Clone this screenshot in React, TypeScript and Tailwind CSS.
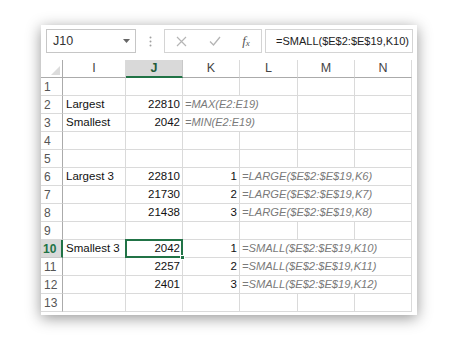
import { Fragment } from 'react'

/* Excel-style sheet snippet: formula bar + small grid I..N, rows 1..13.
   J10 is the active cell, so column J and row 10 headers are highlighted. */

const COLS = ['I', 'J', 'K', 'L', 'M', 'N']

type Row = {
  n: number
  label?: string
  value?: string
  k?: string
  // formula text and where it starts (K spans 2, L spans 3)
  formula?: string
  formulaAt?: 'K' | 'L'
}

const ROWS: Row[] = [
  { n: 1 },
  { n: 2, label: 'Largest', value: '22810', formula: '=MAX(E2:E19)', formulaAt: 'K' },
  { n: 3, label: 'Smallest', value: '2042', formula: '=MIN(E2:E19)', formulaAt: 'K' },
  { n: 4 },
  { n: 5 },
  { n: 6, label: 'Largest 3', value: '22810', k: '1', formula: '=LARGE($E$2:$E$19,K6)', formulaAt: 'L' },
  { n: 7, value: '21730', k: '2', formula: '=LARGE($E$2:$E$19,K7)', formulaAt: 'L' },
  { n: 8, value: '21438', k: '3', formula: '=LARGE($E$2:$E$19,K8)', formulaAt: 'L' },
  { n: 9 },
  { n: 10, label: 'Smallest 3', value: '2042', k: '1', formula: '=SMALL($E$2:$E$19,K10)', formulaAt: 'L' },
  { n: 11, value: '2257', k: '2', formula: '=SMALL($E$2:$E$19,K11)', formulaAt: 'L' },
  { n: 12, value: '2401', k: '3', formula: '=SMALL($E$2:$E$19,K12)', formulaAt: 'L' },
  { n: 13 },
]

const cell = 'h-[18px] border-r border-b border-[#dadada] flex items-center overflow-visible whitespace-nowrap'

function FormulaBar() {
  return (
    <div className="flex items-center h-[24px] pl-[5px] pr-[4px] gap-0">
      <div className="w-[90px] h-[24px] border border-[#c6c6c6] bg-white flex items-center justify-between pl-[6px] pr-[5px] text-[12.5px] text-[#333]">
        <span>J10</span>
        <svg width="7" height="4" viewBox="0 0 7 4"><path d="M0 0h7L3.5 4z" fill="#666" /></svg>
      </div>
      <div className="w-[28px] flex justify-center">
        <svg width="3" height="11" viewBox="0 0 3 11">
          <circle cx="1.5" cy="1.5" r="1" fill="#a0a0a0" />
          <circle cx="1.5" cy="5.5" r="1" fill="#a0a0a0" />
          <circle cx="1.5" cy="9.5" r="1" fill="#a0a0a0" />
        </svg>
      </div>
      <div className="w-[98px] h-[24px] border border-[#d4d4d4] bg-white flex items-center">
        <div className="w-[33px] flex justify-center">
          <svg width="11" height="11" viewBox="0 0 11 11"><path d="M1 1l9 9M10 1l-9 9" stroke="#b5b5b5" strokeWidth="1.2" /></svg>
        </div>
        <div className="w-[33px] flex justify-center">
          <svg width="12" height="10" viewBox="0 0 12 10"><path d="M1 5.5l3.5 3.5L11 1" stroke="#b5b5b5" strokeWidth="1.3" fill="none" /></svg>
        </div>
        <div className="w-[30px] flex justify-center items-baseline italic text-[#555] font-['Liberation_Serif',serif]">
          <span className="text-[13px]">f</span>
          <span className="text-[9px] relative top-[1px]">x</span>
        </div>
      </div>
      <div className="ml-[3px] flex-1 h-[24px] border border-[#d4d4d4] bg-white flex items-center pl-[10px] text-[11px] text-[#222]">
        =SMALL($E$2:$E$19,K10)
      </div>
    </div>
  )
}

export default function App() {
  return (
    <div className="w-[460px] h-[348px] bg-white pt-[25px] pl-[41px] font-['Liberation_Sans',Arial,sans-serif]">
      <div className="w-[376px] h-[290px] bg-white shadow-[0_3px_14px_rgba(0,0,0,0.42)] pt-[4px] overflow-hidden">
        <FormulaBar />

        <div className="mt-[7px] grid grid-cols-[22px_63px_57px_57px_58px_57px_57px]">
          {/* column headers */}
          <div className="h-[18px] border-r border-b border-[#ababab] relative">
            <svg className="absolute right-[2px] bottom-[2px]" width="9" height="9" viewBox="0 0 9 9"><path d="M9 0v9H0z" fill="#dcdcdc" /></svg>
          </div>
          {COLS.map((c) =>
            c === 'J' ? (
              <div key={c} className="h-[18px] bg-[#d9d9d9] border-r border-[#c8c8c8] border-b-2 border-b-[#217346] flex items-center justify-center text-[12.5px] font-bold text-[#1f5c3a]">
                {c}
              </div>
            ) : (
              <div key={c} className="h-[18px] border-r border-[#dadada] border-b border-b-[#ababab] flex items-center justify-center text-[12.5px] text-[#444]">
                {c}
              </div>
            ),
          )}

          {ROWS.map((r) => {
            const active = r.n === 10
            return (
              <Fragment key={r.n}>
                <div
                  className={
                    active
                      ? 'h-[18px] bg-[#d9d9d9] border-r-2 border-r-[#217346] border-b border-b-[#c8c8c8] flex items-center pl-[2px] text-[12px] font-bold text-[#217346]'
                      : 'h-[18px] border-r border-r-[#ababab] border-b border-b-[#dadada] flex items-center pl-[3px] text-[12px] text-[#555]'
                  }
                >
                  {r.n}
                </div>
                {/* I */}
                <div className={`${cell} pl-[3px] text-[11.5px] text-[#111]`}>{r.label}</div>
                {/* J */}
                <div
                  className={
                    active
                      ? 'relative border-2 border-[#217346] -ml-px -mt-px h-[19px] flex items-center justify-end pr-[1px] text-[11.5px] text-[#111]'
                      : `${cell} justify-end pr-[2px] text-[11.5px] text-[#111]`
                  }
                >
                  {r.value}
                  {active && <span className="absolute -right-[4px] -bottom-[4px] w-[5px] h-[5px] bg-[#217346] border border-white" />}
                </div>
                {/* K..N */}
                {r.formulaAt === 'K' ? (
                  <>
                    <div className={`${cell} col-span-2 pl-[2px] text-[11px] italic text-[#7a7a7a]`}>{r.formula}</div>
                    <div className={cell} />
                    <div className={cell} />
                  </>
                ) : r.formulaAt === 'L' ? (
                  <>
                    <div className={`${cell} justify-end pr-[2px] text-[11.5px] text-[#111]`}>{r.k}</div>
                    <div className={`${cell} col-span-3 pl-[2px] text-[11.2px] italic text-[#7a7a7a]`}>{r.formula}</div>
                  </>
                ) : (
                  <>
                    <div className={cell} />
                    <div className={cell} />
                    <div className={cell} />
                    <div className={cell} />
                  </>
                )}
              </Fragment>
            )
          })}
        </div>
      </div>
    </div>
  )
}
